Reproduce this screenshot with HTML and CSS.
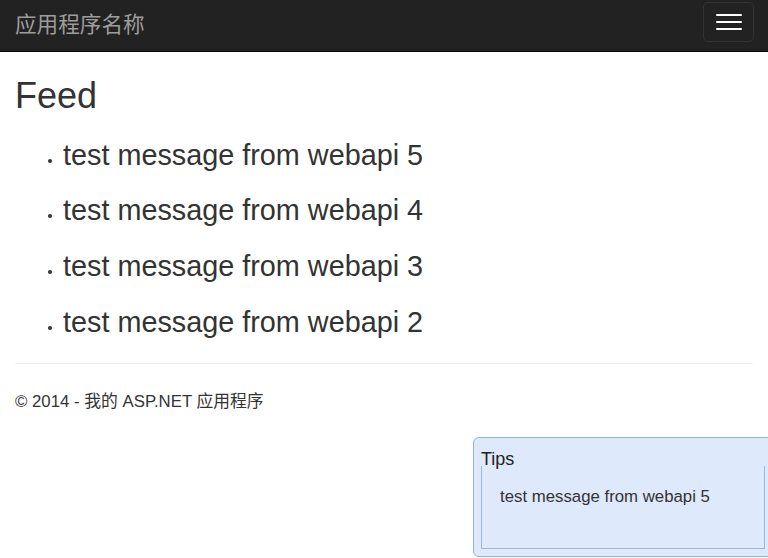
FILE: index.html
```html
<!DOCTYPE html>
<html lang="zh-CN">
<head>
<meta charset="utf-8">
<title>Feed</title>
<link rel="stylesheet" href="styles.css">
</head>
<body>
<header class="navbar">
  <a class="brand" href="#">应用程序名称</a>
  <button class="toggle" type="button" aria-label="菜单">
    <span class="bar"></span>
    <span class="bar"></span>
    <span class="bar"></span>
  </button>
</header>
<main class="container">
  <h2 class="title">Feed</h2>
  <ul class="feed">
    <li class="feed-item"><h3 class="feed-text">test message from webapi 5</h3></li>
    <li class="feed-item"><h3 class="feed-text">test message from webapi 4</h3></li>
    <li class="feed-item"><h3 class="feed-text">test message from webapi 3</h3></li>
    <li class="feed-item"><h3 class="feed-text">test message from webapi 2</h3></li>
  </ul>
  <hr class="divider">
  <footer class="footer">
    <p class="copy">© 2014 - 我的 ASP.NET 应用程序</p>
  </footer>
</main>
<aside class="tips">
  <div class="tips-title">Tips</div>
  <div class="tips-body">test message from webapi 5</div>
</aside>
</body>
</html>
```

FILE: styles.css
```css
html, body {
  margin: 0;
  padding: 0;
}
body {
  font-family: "Liberation Sans", Arial, "Noto Sans CJK SC", sans-serif;
  color: #333;
  background: #fff;
  font-size: 16.8px;
  line-height: 24px;
}
.navbar {
  height: 51px;
  background: #222;
  border-bottom: 1px solid #080808;
  display: flex;
  justify-content: space-between;
  align-items: flex-start;
  padding: 0 14px 0 15px;
}
.brand {
  font-family: "Noto Sans CJK SC", "Liberation Sans", sans-serif;
  font-size: 21.6px;
  line-height: 24px;
  margin-top: 11px;
  color: #9d9d9d;
  text-decoration: none;
}
.toggle {
  margin-top: 2px;
  width: 51px;
  height: 40px;
  box-sizing: border-box;
  background: transparent;
  border: 1px solid #333;
  border-radius: 5px;
  padding: 0;
  display: flex;
  flex-direction: column;
  justify-content: center;
  align-items: center;
  gap: 5px;
}
.bar {
  display: block;
  width: 26px;
  height: 2px;
  background: #fff;
  border-radius: 1px;
}
.container {
  padding: 0 15px;
}
.title {
  font-size: 36px;
  line-height: 39.6px;
  font-weight: 500;
  margin: 24px 0 0;
  color: #333;
}
.feed {
  list-style: none;
  margin: 24px 0 0;
  padding: 0 0 0 48px;
}
.feed-item {
  position: relative;
  padding-top: 24px;
}
.feed-item:first-child {
  padding-top: 0;
}
.feed-item::before {
  content: "";
  position: absolute;
  left: -15px;
  top: 43px;
  width: 4px;
  height: 4px;
  border-radius: 50%;
  background: #333;
}
.feed-item:first-child::before {
  top: 19px;
}
.feed-text {
  font-size: 28.8px;
  line-height: 31.68px;
  font-weight: 500;
  margin: 0;
  color: #333;
}
.divider {
  border: 0;
  border-top: 1px solid #eee;
  margin: 25px 0 26px;
  height: 0;
}
.copy {
  margin: 0;
}
.tips {
  position: absolute;
  left: 473px;
  top: 437px;
  width: 300px;
  box-sizing: border-box;
  background: #dee9fc;
  border: 1px solid #8fb1e4;
  border-radius: 6px;
  padding: 8px 7px 7px;
}
.tips-title {
  font-size: 18px;
  height: 20px;
  line-height: 26px;
  color: #222;
}
.tips-body {
  height: 63px;
  border: 1px solid #9bb5dc;
  border-top: 0;
  padding: 19px 18px 0;
  color: #333;
}
```
